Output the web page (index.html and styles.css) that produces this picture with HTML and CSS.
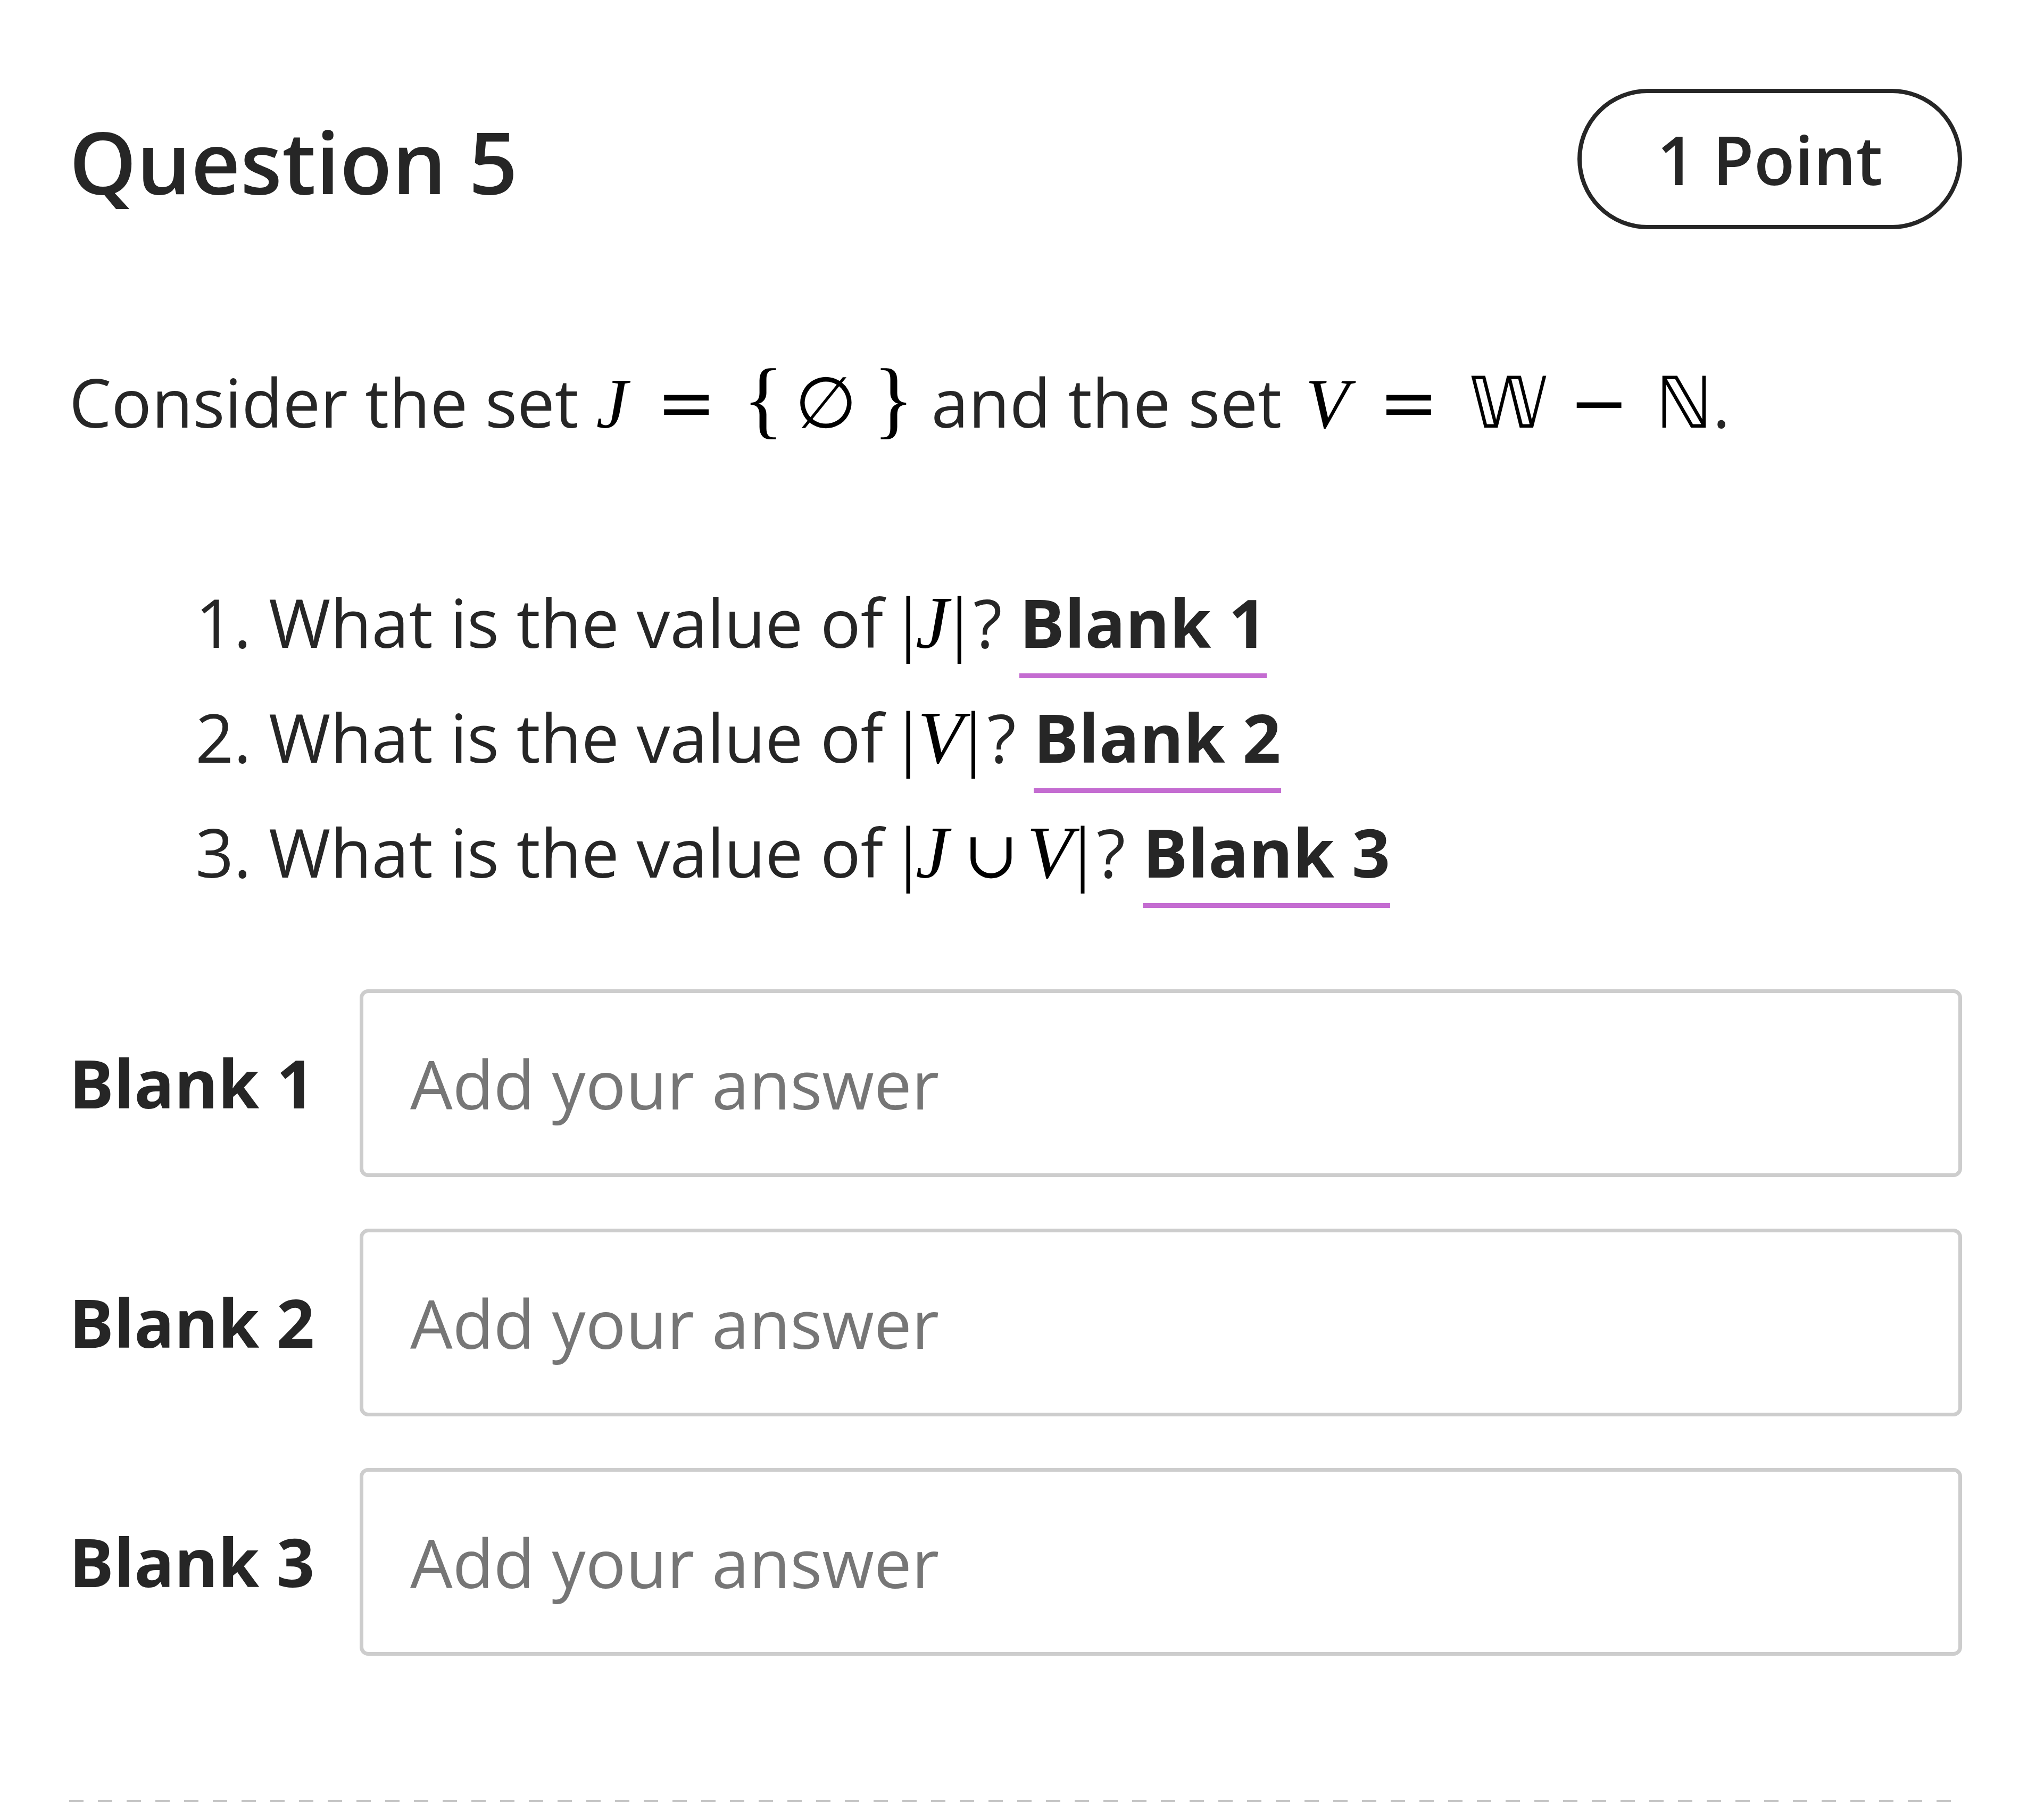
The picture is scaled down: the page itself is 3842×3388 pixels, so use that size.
FILE: index.html
```html
<!DOCTYPE html>
<html lang="en">
<head>
<meta charset="utf-8">
<title>Question 5</title>
<link rel="stylesheet" href="styles.css">
</head>
<body>
<main class="question">
  <header class="q-head">
    <h2 class="q-title">Question 5</h2>
    <div class="points">1 Point</div>
  </header>

  <p class="prompt">Consider the set <span class="m"><span class="mi">J</span><span class="mo eq1">=</span><span class="brace open">{</span><span class="empty">∅</span><span class="brace close">}</span></span> and the set <span class="m"><span class="mi vv">V</span><span class="mo eq2">=</span><span class="bb bbw">𝕎</span><span class="mo minus">−</span><span class="bb bbn">ℕ</span></span>.</p>

  <ol class="items">
    <li>What is the value of <span class="m"><span class="bar">|</span><span class="mi jj">J</span><span class="bar end">|</span></span>? <span class="blank">Blank 1</span></li>
    <li>What is the value of <span class="m"><span class="bar">|</span><span class="mi v2">V</span><span class="bar end">|</span></span>? <span class="blank">Blank 2</span></li>
    <li>What is the value of <span class="m"><span class="bar">|</span><span class="mi jj">J</span><span class="cup">∪</span><span class="mi v2">V</span><span class="bar end">|</span></span>? <span class="blank">Blank 3</span></li>
  </ol>

  <div class="answers">
    <label class="blank-label" for="b1">Blank 1</label>
    <input id="b1" class="answer" type="text" placeholder="Add your answer">
    <label class="blank-label" for="b2">Blank 2</label>
    <input id="b2" class="answer" type="text" placeholder="Add your answer">
    <label class="blank-label" for="b3">Blank 3</label>
    <input id="b3" class="answer" type="text" placeholder="Add your answer">
  </div>

  <div class="divider"></div>
</main>
</body>
</html>
```

FILE: styles.css
```css
html, body {
  margin: 0;
  padding: 0;
  background: #ffffff;
}

body {
  font-family: "Open Sans", "Noto Sans", sans-serif;
  color: #262626;
  overflow: hidden;
}

.question {
  padding: 167px 154px 0 130px;
}

/* Header */
.q-head {
  display: flex;
  justify-content: space-between;
  align-items: center;
}

.q-title {
  margin: 8px 0 0;
  font-size: 161px;
  font-weight: 600;
  line-height: 1.362;
}

.points {
  box-sizing: border-box;
  width: 723px;
  height: 264px;
  border: 8px solid #262626;
  border-radius: 132px;
  display: flex;
  align-items: center;
  justify-content: center;
  font-size: 126px;
  font-weight: 600;
  line-height: 1;
}

/* Prompt */
.prompt {
  margin: 230px 0 0;
  font-size: 126px;
  line-height: 189px;
}

.m {
  font-family: "Liberation Serif", "DejaVu Serif", serif;
  font-size: 134px;
  line-height: 1;
  color: #000000;
}

.mi {
  font-style: italic;
}

.mo {
  font-family: "DejaVu Serif", "Liberation Serif", serif;
}

.eq1 { margin-left: 54px; }
.eq2 { margin-left: 56px; }
.vv { margin-left: 12px; }

.brace {
  font-family: "Liberation Serif", serif;
  font-size: 160px;
  font-weight: 400;
  line-height: 1;
}

.brace.open { margin-left: 50px; }
.brace.close { margin-left: 30px; }

.empty {
  font-family: "DejaVu Serif", serif;
  margin-left: 21px;
}

.bb {
  font-family: "DejaVu Sans", "DejaVu Serif", serif;
}

.bbw { margin-left: 57px; }
.minus { margin-left: 40px; }
.bbn { margin-left: 50px; }

/* Sub-questions */
.items {
  margin: 211px 0 0;
  padding-left: 375px;
  font-size: 126px;
  line-height: 216px;
}

.items .m {
  font-size: 140px;
}

.bar {
  font-family: "Liberation Serif", serif;
}

.bar.end {
  padding: 0 12px 0 2px;
}

.jj { margin-right: 4px; }
.v2 { margin-left: 4px; margin-right: 3px; }

.cup {
  font-family: "DejaVu Serif", serif;
  font-size: 0.88em;
  margin: 0 12px 0 24px;
}

.blank {
  font-weight: 700;
  padding-bottom: 11px;
  border-bottom: 9px solid #c46cd1;
}

/* Answer fields */
.answers {
  margin-top: 151px;
  display: grid;
  grid-template-columns: 546px 1fr;
  row-gap: 97px;
  align-items: center;
}

.blank-label {
  font-size: 125px;
  font-weight: 700;
  line-height: 1.362;
  color: #262626;
}

.answer {
  box-sizing: border-box;
  width: 100%;
  height: 353px;
  margin: 0;
  border: 7px solid #cdcdcd;
  border-radius: 16px;
  padding: 0 0 0 88px;
  font-family: "Open Sans", "Noto Sans", sans-serif;
  font-size: 126px;
  font-weight: 400;
  color: #262626;
  background: #ffffff;
  outline: none;
}

.answer::placeholder {
  color: #767676;
  opacity: 1;
}

/* Dashed separator */
.divider {
  margin-top: 271px;
  height: 7px;
  background: repeating-linear-gradient(to right, #c4c4c4 0 27px, transparent 27px 54px);
}
```
